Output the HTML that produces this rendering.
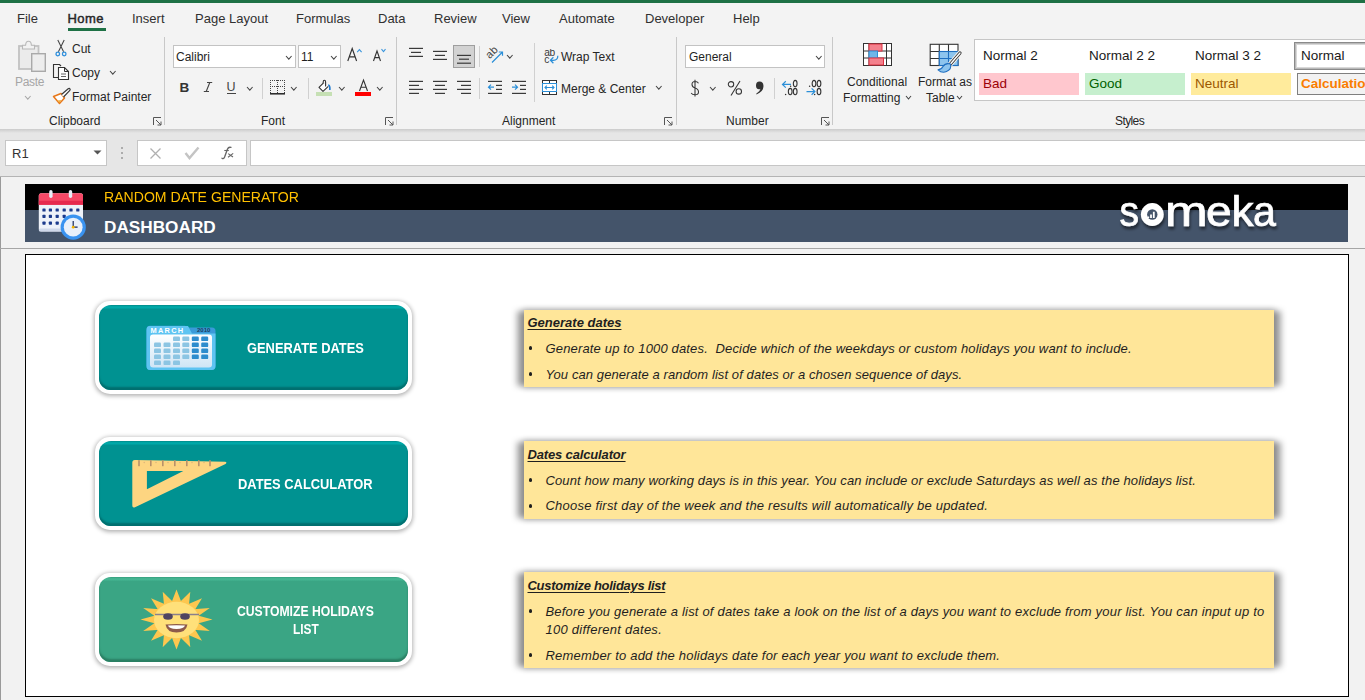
<!DOCTYPE html>
<html><head><meta charset="utf-8">
<style>
*{box-sizing:border-box;margin:0;padding:0}
html,body{width:1365px;height:700px;overflow:hidden;background:#f0f0f0;font-family:"Liberation Sans",sans-serif;color:#262626}
.a{position:absolute}
.t{position:absolute;white-space:nowrap}
</style></head><body>
<div class="a" style="left:0px;top:0px;width:1365px;height:3px;background:#1e7145"></div>
<div class="a" style="left:0px;top:3px;width:1365px;height:126px;background:#f3f3f3"></div>
<div class="t" style="left:17px;top:12.00px;font-size:13px;line-height:13px;color:#303030;font-weight:normal;font-style:normal;font-family:'Liberation Sans',sans-serif;">File</div>
<div class="t" style="left:67.5px;top:12.00px;font-size:13px;line-height:13px;color:#262626;font-weight:normal;font-style:normal;font-family:'Liberation Sans',sans-serif;-webkit-text-stroke:0.45px #262626;letter-spacing:0.4px">Home</div>
<div class="t" style="left:132px;top:12.00px;font-size:13px;line-height:13px;color:#303030;font-weight:normal;font-style:normal;font-family:'Liberation Sans',sans-serif;">Insert</div>
<div class="t" style="left:195px;top:12.00px;font-size:13px;line-height:13px;color:#303030;font-weight:normal;font-style:normal;font-family:'Liberation Sans',sans-serif;">Page Layout</div>
<div class="t" style="left:296px;top:12.00px;font-size:13px;line-height:13px;color:#303030;font-weight:normal;font-style:normal;font-family:'Liberation Sans',sans-serif;">Formulas</div>
<div class="t" style="left:378px;top:12.00px;font-size:13px;line-height:13px;color:#303030;font-weight:normal;font-style:normal;font-family:'Liberation Sans',sans-serif;">Data</div>
<div class="t" style="left:434px;top:12.00px;font-size:13px;line-height:13px;color:#303030;font-weight:normal;font-style:normal;font-family:'Liberation Sans',sans-serif;">Review</div>
<div class="t" style="left:502px;top:12.00px;font-size:13px;line-height:13px;color:#303030;font-weight:normal;font-style:normal;font-family:'Liberation Sans',sans-serif;">View</div>
<div class="t" style="left:559px;top:12.00px;font-size:13px;line-height:13px;color:#303030;font-weight:normal;font-style:normal;font-family:'Liberation Sans',sans-serif;">Automate</div>
<div class="t" style="left:645px;top:12.00px;font-size:13px;line-height:13px;color:#303030;font-weight:normal;font-style:normal;font-family:'Liberation Sans',sans-serif;">Developer</div>
<div class="t" style="left:733px;top:12.00px;font-size:13px;line-height:13px;color:#303030;font-weight:normal;font-style:normal;font-family:'Liberation Sans',sans-serif;">Help</div>
<div class="a" style="left:68px;top:28px;width:38px;height:3px;background:#1e7145"></div>
<div class="a" style="left:164px;top:37px;width:1px;height:88px;background:#c8c8c8"></div>
<div class="a" style="left:396px;top:37px;width:1px;height:88px;background:#c8c8c8"></div>
<div class="a" style="left:676px;top:37px;width:1px;height:88px;background:#c8c8c8"></div>
<div class="a" style="left:832px;top:37px;width:1px;height:88px;background:#c8c8c8"></div>
<svg class="a" style="left:16px;top:39px;" width="32" height="34" viewBox="0 0 32 34">
<rect x="3" y="7" width="19.5" height="23" fill="#ebebeb" stroke="#c2c2c2" stroke-width="1.8"/>
<path d="M6.5 10 V6.2 H9.6 Q9.8 2.3 12.5 2.3 Q15.2 2.3 15.4 6.2 H18.5 V10 Z" fill="#f2f2f2" stroke="#b8b8b8" stroke-width="1.1"/>
<rect x="15.7" y="14.7" width="13.6" height="17.6" fill="#ededed" stroke="#a9a9a9" stroke-width="1.4"/>
</svg>
<div class="t" style="left:15px;top:75.84px;font-size:12px;line-height:12px;color:#a6a6a6;font-weight:normal;font-style:normal;font-family:'Liberation Sans',sans-serif;letter-spacing:-0.3px">Paste</div>
<svg class="a" style="left:24px;top:95px;" width="7.6" height="5.1" viewBox="0 0 7.6 5.1"><path d="M1 1 L3.8 4.1 L6.6 1" fill="none" stroke="#a6a6a6" stroke-width="1.05"/></svg>
<svg class="a" style="left:54px;top:39px;" width="14" height="18" viewBox="0 0 14 18">
<path d="M3.8 1 L9.6 12.8 M10.2 1 L4.4 12.8" stroke="#444" stroke-width="1.05" fill="none"/>
<circle cx="3.8" cy="15" r="1.8" fill="none" stroke="#2f8fdc" stroke-width="1.3"/>
<circle cx="10.2" cy="15" r="1.8" fill="none" stroke="#2f8fdc" stroke-width="1.3"/>
</svg>
<div class="t" style="left:72px;top:42.84px;font-size:12px;line-height:12px;color:#262626;font-weight:normal;font-style:normal;font-family:'Liberation Sans',sans-serif;">Cut</div>
<svg class="a" style="left:52px;top:63px;" width="18" height="18" viewBox="0 0 18 18">
<path d="M8.5 14.5 H1.5 V1.5 H7.5 L9 3" fill="none" stroke="#333" stroke-width="1.1"/>
<path d="M6.5 4.5 H12.5 L16.5 8.5 V16.5 H6.5 Z" fill="#fff" stroke="#333" stroke-width="1.1"/>
<path d="M12.5 4.5 V8.5 H16.5" fill="none" stroke="#333" stroke-width="1"/>
<path d="M9 11 H14 M9 13.5 H14" stroke="#555" stroke-width="0.9"/>
</svg>
<div class="t" style="left:72px;top:67.34px;font-size:12px;line-height:12px;color:#262626;font-weight:normal;font-style:normal;font-family:'Liberation Sans',sans-serif;">Copy</div>
<svg class="a" style="left:109px;top:70px;" width="7.6" height="5.1" viewBox="0 0 7.6 5.1"><path d="M1 1 L3.8 4.1 L6.6 1" fill="none" stroke="#444" stroke-width="1.05"/></svg>
<svg class="a" style="left:52px;top:87px;" width="19" height="18" viewBox="0 0 19 18">
<path d="M1.5 9.5 L9 6.5 L12.5 11 L7.5 16.5 Z" fill="#fff" stroke="#e8771a" stroke-width="1.5" stroke-linejoin="round"/>
<path d="M5 13.5 L9.5 13 L7.5 15.8 Z" fill="#f0b040"/>
<path d="M9.5 7.5 L16.2 1.8 Q17.3 1 18 2 Q18.5 2.8 17.6 3.7 L11.5 10" fill="#fff" stroke="#3a3a3a" stroke-width="1.2" stroke-linejoin="round"/>
</svg>
<div class="t" style="left:72px;top:90.84px;font-size:12px;line-height:12px;color:#262626;font-weight:normal;font-style:normal;font-family:'Liberation Sans',sans-serif;">Format Painter</div>
<div class="t" style="left:49px;top:114.84px;font-size:12px;line-height:12px;color:#262626;font-weight:normal;font-style:normal;font-family:'Liberation Sans',sans-serif;">Clipboard</div>
<svg class="a" style="left:153px;top:117px;" width="9" height="9" viewBox="0 0 9 9"><path d="M0.5 8 V0.5 H8" fill="none" stroke="#555" stroke-width="1"/><path d="M3 3 L8 8 M8 4.5 V8 H4.5" fill="none" stroke="#555" stroke-width="1"/></svg>
<div class="a" style="left:173px;top:45px;width:123px;height:23px;background:#fff;border:1px solid #c3c3c3"></div>
<div class="t" style="left:176px;top:50.84px;font-size:12px;line-height:12px;color:#1f1f1f;font-weight:normal;font-style:normal;font-family:'Liberation Sans',sans-serif;">Calibri</div>
<svg class="a" style="left:285px;top:55px;" width="7.6" height="5.1" viewBox="0 0 7.6 5.1"><path d="M1 1 L3.8 4.1 L6.6 1" fill="none" stroke="#444" stroke-width="1.05"/></svg>
<div class="a" style="left:298px;top:45px;width:43px;height:23px;background:#fff;border:1px solid #c3c3c3"></div>
<div class="t" style="left:301px;top:50.84px;font-size:12px;line-height:12px;color:#1f1f1f;font-weight:normal;font-style:normal;font-family:'Liberation Sans',sans-serif;">11</div>
<svg class="a" style="left:330px;top:55px;" width="7.6" height="5.1" viewBox="0 0 7.6 5.1"><path d="M1 1 L3.8 4.1 L6.6 1" fill="none" stroke="#444" stroke-width="1.05"/></svg>
<svg class="a" style="left:345px;top:46px;" width="20" height="17" viewBox="0 0 20 17"><path d="M2.8 15 L7.2 2.5 L11.6 15 M4.3 10.8 H10.1" fill="none" stroke="#333" stroke-width="1.15"/><path d="M12.2 6.2 L14.4 3.6 L16.6 6.2" fill="none" stroke="#3a96dd" stroke-width="1.1"/></svg>
<svg class="a" style="left:371px;top:46px;" width="20" height="17" viewBox="0 0 20 17"><path d="M2.5 15 L6 5 L9.5 15 M3.7 11.6 H8.3" fill="none" stroke="#333" stroke-width="1.1"/><path d="M10.5 3.2 L12.5 5.6 L14.5 3.2" fill="none" stroke="#3a96dd" stroke-width="1.1"/></svg>
<div class="t" style="left:179.5px;top:80.57px;font-size:13.5px;line-height:13.5px;color:#333;font-weight:bold;font-style:normal;font-family:'Liberation Sans',sans-serif;">B</div>
<svg class="a" style="left:202px;top:81px;" width="12" height="12" viewBox="0 0 12 12"><path d="M7.8 1.5 L4.2 10.5 M5 1.5 H10.2 M1.8 10.5 H7" fill="none" stroke="#444" stroke-width="1.1"/></svg>
<div class="t" style="left:226.5px;top:81.42px;font-size:12.5px;line-height:12.5px;color:#444;font-weight:normal;font-style:normal;font-family:'Liberation Sans',sans-serif;">U</div>
<div class="a" style="left:227px;top:93px;width:9px;height:1px;background:#444"></div>
<svg class="a" style="left:245.5px;top:85.5px;" width="7.6" height="5.1" viewBox="0 0 7.6 5.1"><path d="M1 1 L3.8 4.1 L6.6 1" fill="none" stroke="#444" stroke-width="1.05"/></svg>
<div class="a" style="left:262px;top:78px;width:1px;height:21px;background:#d0d0d0"></div>
<svg class="a" style="left:269px;top:79px;" width="17" height="17" viewBox="0 0 17 17">
<rect x="1" y="1" width="1" height="1" fill="#444"/><rect x="1" y="7" width="1" height="1" fill="#444"/><rect x="3" y="1" width="1" height="1" fill="#444"/><rect x="3" y="7" width="1" height="1" fill="#444"/><rect x="5" y="1" width="1" height="1" fill="#444"/><rect x="5" y="7" width="1" height="1" fill="#444"/><rect x="7" y="1" width="1" height="1" fill="#444"/><rect x="7" y="7" width="1" height="1" fill="#444"/><rect x="9" y="1" width="1" height="1" fill="#444"/><rect x="9" y="7" width="1" height="1" fill="#444"/><rect x="11" y="1" width="1" height="1" fill="#444"/><rect x="11" y="7" width="1" height="1" fill="#444"/><rect x="13" y="1" width="1" height="1" fill="#444"/><rect x="13" y="7" width="1" height="1" fill="#444"/><rect x="15" y="1" width="1" height="1" fill="#444"/><rect x="15" y="7" width="1" height="1" fill="#444"/><rect x="1" y="1" width="1" height="1" fill="#444"/><rect x="15" y="1" width="1" height="1" fill="#444"/><rect x="8" y="1" width="1" height="1" fill="#444"/><rect x="1" y="3" width="1" height="1" fill="#444"/><rect x="15" y="3" width="1" height="1" fill="#444"/><rect x="8" y="3" width="1" height="1" fill="#444"/><rect x="1" y="5" width="1" height="1" fill="#444"/><rect x="15" y="5" width="1" height="1" fill="#444"/><rect x="8" y="5" width="1" height="1" fill="#444"/><rect x="1" y="7" width="1" height="1" fill="#444"/><rect x="15" y="7" width="1" height="1" fill="#444"/><rect x="8" y="7" width="1" height="1" fill="#444"/><rect x="1" y="9" width="1" height="1" fill="#444"/><rect x="15" y="9" width="1" height="1" fill="#444"/><rect x="8" y="9" width="1" height="1" fill="#444"/><rect x="1" y="11" width="1" height="1" fill="#444"/><rect x="15" y="11" width="1" height="1" fill="#444"/><rect x="8" y="11" width="1" height="1" fill="#444"/><rect x="1" y="13" width="1" height="1" fill="#444"/><rect x="15" y="13" width="1" height="1" fill="#444"/><rect x="8" y="13" width="1" height="1" fill="#444"/>
<path d="M1 14.8 H16" stroke="#222" stroke-width="1.5"/>
</svg>
<svg class="a" style="left:290px;top:86px;" width="7.6" height="5.1" viewBox="0 0 7.6 5.1"><path d="M1 1 L3.8 4.1 L6.6 1" fill="none" stroke="#444" stroke-width="1.05"/></svg>
<div class="a" style="left:308px;top:78px;width:1px;height:21px;background:#d0d0d0"></div>
<svg class="a" style="left:316px;top:79px;" width="18" height="18" viewBox="0 0 18 18">
<path d="M7.3 4.2 L3 8.3 L7 12.3 L12.3 7.3" fill="#fff" stroke="#333" stroke-width="1.1" stroke-linejoin="round"/>
<path d="M9.6 7.5 V3 Q9.6 1.3 8.4 1.3 Q7.2 1.3 7.2 3 V4.5" fill="none" stroke="#333" stroke-width="1.1"/>
<path d="M12.2 6 Q14.2 6.3 13.8 11" fill="none" stroke="#1f7ad0" stroke-width="1.7"/>
<rect x="0" y="13" width="16" height="4" fill="#c6e0b4"/>
</svg>
<svg class="a" style="left:337.5px;top:86px;" width="7.6" height="5.1" viewBox="0 0 7.6 5.1"><path d="M1 1 L3.8 4.1 L6.6 1" fill="none" stroke="#444" stroke-width="1.05"/></svg>
<svg class="a" style="left:357px;top:78px;" width="14" height="14" viewBox="0 0 14 14"><path d="M2.5 13 L6.5 2 L10.5 13 M3.8 9.3 H9.2" fill="none" stroke="#333" stroke-width="1.1"/></svg>
<div class="a" style="left:355px;top:92px;width:16px;height:4px;background:#ff0000"></div>
<svg class="a" style="left:376px;top:86px;" width="7.6" height="5.1" viewBox="0 0 7.6 5.1"><path d="M1 1 L3.8 4.1 L6.6 1" fill="none" stroke="#444" stroke-width="1.05"/></svg>
<div class="t" style="left:261px;top:114.84px;font-size:12px;line-height:12px;color:#262626;font-weight:normal;font-style:normal;font-family:'Liberation Sans',sans-serif;">Font</div>
<svg class="a" style="left:385px;top:117px;" width="9" height="9" viewBox="0 0 9 9"><path d="M0.5 8 V0.5 H8" fill="none" stroke="#555" stroke-width="1"/><path d="M3 3 L8 8 M8 4.5 V8 H4.5" fill="none" stroke="#555" stroke-width="1"/></svg>
<!--RIBBON2-->
<svg class="a" style="left:408px;top:44px;" width="17" height="16" viewBox="0 0 17 16"><rect x="1" y="3.8" width="14" height="1.2" fill="#3a3a3a"/><rect x="3" y="7.8" width="10" height="1.2" fill="#3a3a3a"/><rect x="1" y="11.8" width="14" height="1.2" fill="#3a3a3a"/></svg>
<svg class="a" style="left:432px;top:47px;" width="17" height="16" viewBox="0 0 17 16"><rect x="1" y="3.8" width="14" height="1.2" fill="#3a3a3a"/><rect x="3" y="7.8" width="10" height="1.2" fill="#3a3a3a"/><rect x="1" y="11.8" width="14" height="1.2" fill="#3a3a3a"/></svg>
<div class="a" style="left:453px;top:45px;width:22px;height:23px;background:#d2d2d2;border:1px solid #9e9e9e"></div>
<svg class="a" style="left:456px;top:51px;" width="17" height="16" viewBox="0 0 17 16"><rect x="1" y="3.8" width="14" height="1.2" fill="#3a3a3a"/><rect x="3" y="7.6" width="10" height="1.2" fill="#3a3a3a"/><rect x="1" y="11.6" width="14" height="1.2" fill="#3a3a3a"/></svg>
<div class="a" style="left:479px;top:46px;width:1px;height:21px;background:#d0d0d0"></div>
<svg class="a" style="left:486px;top:46px;" width="20" height="20" viewBox="0 0 20 20">
<text x="0" y="0" transform="translate(3.8,13.2) rotate(-45)" font-family="Liberation Sans" font-size="11" fill="#444">ab</text>
<path d="M6 16.5 L16.5 6 M12.8 6 H16.5 V9.8" fill="none" stroke="#2b8fd8" stroke-width="1.2"/>
</svg>
<svg class="a" style="left:506px;top:54px;" width="7.6" height="5.1" viewBox="0 0 7.6 5.1"><path d="M1 1 L3.8 4.1 L6.6 1" fill="none" stroke="#444" stroke-width="1.05"/></svg>
<svg class="a" style="left:408px;top:77px;" width="17" height="20" viewBox="0 0 17 20"><rect x="1" y="3.8" width="14" height="1.2" fill="#3a3a3a"/><rect x="1" y="7.8" width="10" height="1.2" fill="#3a3a3a"/><rect x="1" y="11.8" width="14" height="1.2" fill="#3a3a3a"/><rect x="1" y="15.8" width="10" height="1.2" fill="#3a3a3a"/></svg>
<svg class="a" style="left:432px;top:77px;" width="17" height="20" viewBox="0 0 17 20"><rect x="1" y="3.8" width="14" height="1.2" fill="#3a3a3a"/><rect x="3" y="7.8" width="10" height="1.2" fill="#3a3a3a"/><rect x="1" y="11.8" width="14" height="1.2" fill="#3a3a3a"/><rect x="3" y="15.8" width="10" height="1.2" fill="#3a3a3a"/></svg>
<svg class="a" style="left:456px;top:77px;" width="17" height="20" viewBox="0 0 17 20"><rect x="1" y="3.8" width="14" height="1.2" fill="#3a3a3a"/><rect x="5" y="7.8" width="10" height="1.2" fill="#3a3a3a"/><rect x="1" y="11.8" width="14" height="1.2" fill="#3a3a3a"/><rect x="5" y="15.8" width="10" height="1.2" fill="#3a3a3a"/></svg>
<div class="a" style="left:479px;top:78px;width:1px;height:21px;background:#d0d0d0"></div>
<svg class="a" style="left:487px;top:77px;" width="17" height="20" viewBox="0 0 17 20"><rect x="1" y="3.8" width="14" height="1.2" fill="#3a3a3a"/><rect x="9" y="7.8" width="6" height="1.2" fill="#3a3a3a"/><rect x="9" y="11.8" width="6" height="1.2" fill="#3a3a3a"/><rect x="1" y="15.8" width="14" height="1.2" fill="#3a3a3a"/><path d="M7 10.2 H1.5 M4 7.7 L1.5 10.2 L4 12.7" fill="none" stroke="#2b8fd8" stroke-width="1.2"/></svg>
<svg class="a" style="left:511px;top:77px;" width="17" height="20" viewBox="0 0 17 20"><rect x="1" y="3.8" width="14" height="1.2" fill="#3a3a3a"/><rect x="9" y="7.8" width="6" height="1.2" fill="#3a3a3a"/><rect x="9" y="11.8" width="6" height="1.2" fill="#3a3a3a"/><rect x="1" y="15.8" width="14" height="1.2" fill="#3a3a3a"/><path d="M1 10.2 H6.5 M4 7.7 L6.5 10.2 L4 12.7" fill="none" stroke="#2b8fd8" stroke-width="1.2"/></svg>
<div class="a" style="left:534px;top:43px;width:1px;height:59px;background:#d0d0d0"></div>
<svg class="a" style="left:543px;top:49px;" width="17" height="17" viewBox="0 0 17 17">
<text x="1.2" y="6.5" font-family="Liberation Sans" font-size="10.2" fill="#3a3a3a" letter-spacing="-0.3">ab</text>
<text x="1.2" y="14" font-family="Liberation Sans" font-size="10.2" fill="#3a3a3a">c</text>
<path d="M14.8 6.8 Q15 11.3 10.2 11.3 H7.6 M10.4 8.3 L7.4 11.3 L10.4 14.3" fill="none" stroke="#2b8fd8" stroke-width="1.25"/>
</svg>
<div class="t" style="left:561px;top:50.84px;font-size:12px;line-height:12px;color:#262626;font-weight:normal;font-style:normal;font-family:'Liberation Sans',sans-serif;">Wrap Text</div>
<svg class="a" style="left:541px;top:79px;" width="17" height="17" viewBox="0 0 17 17">
<rect x="1.5" y="1.5" width="14" height="14" fill="#fff" stroke="#333" stroke-width="1"/>
<path d="M8.5 1.5 V4.5 M8.5 12.5 V15.5" stroke="#333"/>
<rect x="1.5" y="4.5" width="14" height="8" fill="#fff" stroke="#2b8fd8" stroke-width="1"/>
<path d="M4 8.5 H13 M5.8 6.7 L4 8.5 L5.8 10.3 M11.2 6.7 L13 8.5 L11.2 10.3" fill="none" stroke="#2b8fd8" stroke-width="1.1"/>
</svg>
<div class="t" style="left:561px;top:82.84px;font-size:12px;line-height:12px;color:#262626;font-weight:normal;font-style:normal;font-family:'Liberation Sans',sans-serif;">Merge &amp; Center</div>
<svg class="a" style="left:655px;top:85px;" width="7.6" height="5.1" viewBox="0 0 7.6 5.1"><path d="M1 1 L3.8 4.1 L6.6 1" fill="none" stroke="#444" stroke-width="1.05"/></svg>
<div class="t" style="left:502px;top:114.84px;font-size:12px;line-height:12px;color:#262626;font-weight:normal;font-style:normal;font-family:'Liberation Sans',sans-serif;">Alignment</div>
<svg class="a" style="left:664px;top:117px;" width="9" height="9" viewBox="0 0 9 9"><path d="M0.5 8 V0.5 H8" fill="none" stroke="#555" stroke-width="1"/><path d="M3 3 L8 8 M8 4.5 V8 H4.5" fill="none" stroke="#555" stroke-width="1"/></svg>
<div class="a" style="left:685px;top:45px;width:140px;height:23px;background:#fff;border:1px solid #c3c3c3"></div>
<div class="t" style="left:689px;top:50.84px;font-size:12px;line-height:12px;color:#1f1f1f;font-weight:normal;font-style:normal;font-family:'Liberation Sans',sans-serif;">General</div>
<svg class="a" style="left:815px;top:55px;" width="7.6" height="5.1" viewBox="0 0 7.6 5.1"><path d="M1 1 L3.8 4.1 L6.6 1" fill="none" stroke="#444" stroke-width="1.05"/></svg>
<svg class="a" style="left:688px;top:78px;" width="14" height="20" viewBox="0 0 14 20"><path d="M10.5 5.2 Q9.5 3.5 7 3.5 Q4 3.5 4 6.5 Q4 9 7 10 Q10.5 11 10.5 14 Q10.5 16.8 7 16.8 Q4.2 16.8 3.2 15 M7 1.8 V18.5" fill="none" stroke="#333" stroke-width="1.05"/></svg>
<svg class="a" style="left:709px;top:86px;" width="7.6" height="5.1" viewBox="0 0 7.6 5.1"><path d="M1 1 L3.8 4.1 L6.6 1" fill="none" stroke="#444" stroke-width="1.05"/></svg>
<svg class="a" style="left:726px;top:79px;" width="18" height="18" viewBox="0 0 18 18"><circle cx="5" cy="5.3" r="2.7" fill="none" stroke="#333" stroke-width="1.05"/><circle cx="12.8" cy="12.4" r="2.7" fill="none" stroke="#333" stroke-width="1.05"/><path d="M14 2 L5 16.5" stroke="#333" stroke-width="1.05"/></svg>
<svg class="a" style="left:753px;top:79px;" width="12" height="18" viewBox="0 0 12 18"><path d="M6.5 2.5 Q10.5 2.5 10.5 7 Q10.5 12.5 3.5 15.5 L3.2 14.8 Q7.2 12.3 7.5 9.8 Q6.8 10.3 6 10.3 Q3 10.3 3 6.5 Q3 2.5 6.5 2.5 Z" fill="#333"/></svg>
<div class="a" style="left:774px;top:78px;width:1px;height:21px;background:#d0d0d0"></div>
<svg class="a" style="left:778px;top:76px;" width="48" height="24" viewBox="0 0 48 24"><ellipse cx="17.2" cy="7.6" rx="1.85" ry="3.2" fill="none" stroke="#333" stroke-width="1.1"/><circle cx="12.6" cy="10.3" r="0.75" fill="#333"/><ellipse cx="12.2" cy="15.6" rx="1.85" ry="3.2" fill="none" stroke="#333" stroke-width="1.1"/><ellipse cx="17.2" cy="15.6" rx="1.85" ry="3.2" fill="none" stroke="#333" stroke-width="1.1"/><circle cx="7.6" cy="18.4" r="0.75" fill="#333"/><path d="M13 8.4 H4.6 M7.8 5.2 L4.5 8.4 L7.8 11.6" fill="none" stroke="#2b8fd8" stroke-width="1.2"/><ellipse cx="36" cy="7.6" rx="1.85" ry="3.2" fill="none" stroke="#333" stroke-width="1.1"/><ellipse cx="41" cy="7.6" rx="1.85" ry="3.2" fill="none" stroke="#333" stroke-width="1.1"/><circle cx="31.6" cy="10.3" r="0.75" fill="#333"/><ellipse cx="41" cy="15.6" rx="1.85" ry="3.2" fill="none" stroke="#333" stroke-width="1.1"/><circle cx="36.6" cy="18.4" r="0.75" fill="#333"/><path d="M28.5 15.6 H36.8 M33.6 12.4 L36.9 15.6 L33.6 18.8" fill="none" stroke="#2b8fd8" stroke-width="1.2"/></svg>
<div class="t" style="left:726px;top:114.84px;font-size:12px;line-height:12px;color:#262626;font-weight:normal;font-style:normal;font-family:'Liberation Sans',sans-serif;">Number</div>
<svg class="a" style="left:821px;top:117px;" width="9" height="9" viewBox="0 0 9 9"><path d="M0.5 8 V0.5 H8" fill="none" stroke="#555" stroke-width="1"/><path d="M3 3 L8 8 M8 4.5 V8 H4.5" fill="none" stroke="#555" stroke-width="1"/></svg>
<svg class="a" style="left:863px;top:43px;" width="30" height="24" viewBox="0 0 30 24">
<rect x="0.5" y="0.5" width="28" height="22" fill="#fff" stroke="#333" stroke-width="1"/>
<path d="M6 0.5 V22.5 M23.5 0.5 V22.5 M0.5 8 H28.5 M0.5 15 H28.5" fill="none" stroke="#333" stroke-width="1"/>
<rect x="6" y="1" width="13" height="7" fill="#f4818d" stroke="#e03040" stroke-width="1"/>
<rect x="6" y="8" width="8.5" height="7" fill="#6fb6e8" stroke="#2b8fd8" stroke-width="1"/>
<rect x="6" y="15" width="14.5" height="7" fill="#f4818d" stroke="#e03040" stroke-width="1"/>
</svg>
<div class="t" style="left:847px;top:75.84px;font-size:12px;line-height:12px;color:#262626;font-weight:normal;font-style:normal;font-family:'Liberation Sans',sans-serif;">Conditional</div>
<div class="t" style="left:843px;top:91.84px;font-size:12px;line-height:12px;color:#262626;font-weight:normal;font-style:normal;font-family:'Liberation Sans',sans-serif;">Formatting</div>
<svg class="a" style="left:905px;top:95px;" width="7" height="5" viewBox="0 0 7 5"><path d="M1 1 L3.5 4 L6 1" fill="none" stroke="#444" stroke-width="1.05"/></svg>
<svg class="a" style="left:929px;top:43px;" width="34" height="32" viewBox="0 0 34 32">
<rect x="1.2" y="1.3" width="27.8" height="21.2" fill="#fff" stroke="#333" stroke-width="1.1"/>
<path d="M10.3 1.3 V22.5 M19.5 1.3 V8.5 M1.2 8.5 H10.3 M1.2 15.5 H10.3" fill="none" stroke="#333" stroke-width="1.1"/>
<rect x="10.3" y="8.5" width="18.7" height="14" fill="#8ec5ee" stroke="#1f6fc0" stroke-width="1.1"/>
<path d="M19.5 8.5 V22.5 M10.3 15.5 H29" fill="none" stroke="#1f6fc0" stroke-width="1.1"/>
<path d="M31 10 L21 21.5" stroke="#f3f3f3" stroke-width="5" stroke-linecap="round"/>
<path d="M31 10 L21 21.5" stroke="#333" stroke-width="3.2" stroke-linecap="round"/>
<path d="M31 10 L21 21.5" stroke="#fff" stroke-width="1.4" stroke-linecap="round"/>
<path d="M21.5 21 Q16.5 19.5 14 23.5 Q12.5 26.5 9 26.8 Q13 30.5 17.5 28.5 Q23 26 21.5 21 Z" fill="#8ec5ee" stroke="#1f6fc0" stroke-width="1.1" stroke-linejoin="round"/>
</svg>
<div class="t" style="left:918px;top:75.84px;font-size:12px;line-height:12px;color:#262626;font-weight:normal;font-style:normal;font-family:'Liberation Sans',sans-serif;">Format as</div>
<div class="t" style="left:926px;top:91.84px;font-size:12px;line-height:12px;color:#262626;font-weight:normal;font-style:normal;font-family:'Liberation Sans',sans-serif;">Table</div>
<svg class="a" style="left:956px;top:95px;" width="7" height="5" viewBox="0 0 7 5"><path d="M1 1 L3.5 4 L6 1" fill="none" stroke="#444" stroke-width="1.05"/></svg>
<div class="a" style="left:974px;top:39px;width:400px;height:62px;background:#fff;border:1px solid #c6c6c6"></div>
<div class="t" style="left:983px;top:49.07px;font-size:13.5px;line-height:13.5px;color:#1a1a1a;font-weight:normal;font-style:normal;font-family:'Liberation Sans',sans-serif;">Normal 2</div>
<div class="t" style="left:1089px;top:49.07px;font-size:13.5px;line-height:13.5px;color:#1a1a1a;font-weight:normal;font-style:normal;font-family:'Liberation Sans',sans-serif;">Normal 2 2</div>
<div class="t" style="left:1195px;top:49.07px;font-size:13.5px;line-height:13.5px;color:#1a1a1a;font-weight:normal;font-style:normal;font-family:'Liberation Sans',sans-serif;">Normal 3 2</div>
<div class="a" style="left:979px;top:73px;width:100px;height:22px;background:#ffc7ce"></div>
<div class="t" style="left:983px;top:77.07px;font-size:13.5px;line-height:13.5px;color:#9c0006;font-weight:normal;font-style:normal;font-family:'Liberation Sans',sans-serif;">Bad</div>
<div class="a" style="left:1085px;top:73px;width:100px;height:22px;background:#c6efce"></div>
<div class="t" style="left:1089px;top:77.07px;font-size:13.5px;line-height:13.5px;color:#006100;font-weight:normal;font-style:normal;font-family:'Liberation Sans',sans-serif;">Good</div>
<div class="a" style="left:1191px;top:73px;width:100px;height:22px;background:#ffeb9c"></div>
<div class="t" style="left:1195px;top:77.07px;font-size:13.5px;line-height:13.5px;color:#9c5700;font-weight:normal;font-style:normal;font-family:'Liberation Sans',sans-serif;">Neutral</div>
<div class="a" style="left:1294px;top:42px;width:80px;height:28px;background:#fff;border:2px solid #b9b9b9;box-shadow:inset 0 0 0 1px #d8d8d8"></div>
<div class="a" style="left:1294px;top:42px;width:80px;height:28px;border:1px solid #8a8a8a"></div>
<div class="t" style="left:1301px;top:49.07px;font-size:13.5px;line-height:13.5px;color:#1a1a1a;font-weight:normal;font-style:normal;font-family:'Liberation Sans',sans-serif;">Normal</div>
<div class="a" style="left:1297px;top:73px;width:80px;height:22px;background:#f2f2f2;border:1px solid #7f7f7f"></div>
<div class="t" style="left:1301px;top:77.07px;font-size:13.5px;line-height:13.5px;color:#fa7d00;font-weight:bold;font-style:normal;font-family:'Liberation Sans',sans-serif;">Calculation</div>
<div class="t" style="left:1115px;top:114.84px;font-size:12px;line-height:12px;color:#262626;font-weight:normal;font-style:normal;font-family:'Liberation Sans',sans-serif;letter-spacing:-0.6px">Styles</div>
<!--FBAR-->
<div class="a" style="left:0px;top:129px;width:1365px;height:47px;background:#e6e6e6"></div>
<div class="a" style="left:0px;top:129px;width:1365px;height:4px;background:linear-gradient(#cbcbcb,#e6e6e6)"></div>
<div class="a" style="left:5px;top:140px;width:102px;height:26px;background:#fff;border:1px solid #c6c6c6"></div>
<div class="t" style="left:12px;top:147.00px;font-size:13px;line-height:13px;color:#333;font-weight:normal;font-style:normal;font-family:'Liberation Sans',sans-serif;">R1</div>
<svg class="a" style="left:93px;top:150px;" width="9" height="6" viewBox="0 0 9 6"><path d="M0.5 0.5 H8.5 L4.5 4.5 Z" fill="#555"/></svg>
<svg class="a" style="left:120px;top:146px;" width="4" height="14" viewBox="0 0 4 14"><circle cx="2" cy="2" r="1" fill="#999"/><circle cx="2" cy="7" r="1" fill="#999"/><circle cx="2" cy="12" r="1" fill="#999"/></svg>
<div class="a" style="left:137px;top:140px;width:110px;height:26px;background:#fff;border:1px solid #c6c6c6"></div>
<svg class="a" style="left:149px;top:147px;" width="13" height="13" viewBox="0 0 13 13"><path d="M1.5 1.5 L11.5 11.5 M11.5 1.5 L1.5 11.5" stroke="#b0b0b0" stroke-width="1.3"/></svg>
<svg class="a" style="left:184px;top:146px;" width="16" height="14" viewBox="0 0 16 14"><path d="M1.5 7 L5.5 12 L14.5 1.5" fill="none" stroke="#c4c4c4" stroke-width="2.4"/></svg>
<svg class="a" style="left:214px;top:142px;" width="28" height="22" viewBox="0 0 28 22"><path d="M8 16.2 Q9.6 17.4 10.6 15 L13.4 7.2 Q14.5 4.6 17 5.4" fill="none" stroke="#666" stroke-width="1.35" stroke-linecap="round"/><path d="M10.3 8.5 H14.8" stroke="#666" stroke-width="1.1"/><path d="M14.2 11.6 L19 15 M19.2 11.4 L14 15.2" stroke="#666" stroke-width="1.15"/></svg>
<div class="a" style="left:250px;top:140px;width:1120px;height:26px;background:#fff;border:1px solid #c6c6c6"></div>
<div class="a" style="left:0px;top:176px;width:1365px;height:1px;background:#b4b4b4"></div>
<div class="a" style="left:0px;top:177px;width:1365px;height:523px;background:#f2f2f2"></div>
<div class="a" style="left:0px;top:177px;width:1px;height:523px;background:#9a9a9a"></div>
<div class="a" style="left:25px;top:184px;width:1323px;height:26px;background:#000"></div>
<div class="a" style="left:25px;top:210px;width:1323px;height:32px;background:#44546a"></div>
<div class="a" style="left:0px;top:248px;width:1365px;height:1px;background:#a6a6a6"></div>
<svg class="a" style="left:36px;top:188px;" width="52" height="54" viewBox="0 0 52 54">
<rect x="2.8" y="5.2" width="44.2" height="38.4" rx="2.5" fill="#eef2f9"/>
<rect x="2.8" y="40.5" width="44.2" height="3.1" rx="1.5" fill="#cfd8ea"/>
<path d="M2.8 16.8 V7.7 Q2.8 5.2 5.3 5.2 H44.5 Q47 5.2 47 7.7 V16.8 Z" fill="#f64866"/>
<rect x="2.8" y="12.8" width="44.2" height="4" fill="#e62a4e"/>
<rect x="13.2" y="2" width="3.4" height="8" rx="1.7" fill="#e8eef8"/>
<rect x="32.8" y="2" width="3.4" height="8" rx="1.7" fill="#e8eef8"/>
<rect x="6.4" y="20.4" width="3.2" height="3.2" rx="0.7" fill="#1b3a8c"/><rect x="12.8" y="20.4" width="3.2" height="3.2" rx="0.7" fill="#1b3a8c"/><rect x="19.6" y="20.4" width="3.2" height="3.2" rx="0.7" fill="#1b3a8c"/><rect x="26.6" y="20.4" width="3.2" height="3.2" rx="0.7" fill="#1b3a8c"/><rect x="33.4" y="20.4" width="3.2" height="3.2" rx="0.7" fill="#1b3a8c"/><rect x="40.2" y="20.4" width="3.2" height="3.2" rx="0.7" fill="#1b3a8c"/><rect x="6.4" y="26.8" width="3.2" height="3.2" rx="0.7" fill="#1b3a8c"/><rect x="12.8" y="26.8" width="3.2" height="3.2" rx="0.7" fill="#1b3a8c"/><rect x="19.6" y="26.8" width="3.2" height="3.2" rx="0.7" fill="#1b3a8c"/><rect x="26.6" y="26.8" width="3.2" height="3.2" rx="0.7" fill="#1b3a8c"/><rect x="6.4" y="33.6" width="3.2" height="3.2" rx="0.7" fill="#1b3a8c"/><rect x="12.8" y="33.6" width="3.2" height="3.2" rx="0.7" fill="#1b3a8c"/><rect x="19.6" y="33.6" width="3.2" height="3.2" rx="0.7" fill="#1b3a8c"/>
<circle cx="37.2" cy="39.2" r="12.6" fill="#3a93f0"/>
<circle cx="37.2" cy="39.2" r="9.4" fill="#e9f0fa"/>
<path d="M37.2 33 V39.2 H41.6" fill="none" stroke="#1b2a5a" stroke-width="1.2"/>
<circle cx="37.2" cy="39.2" r="1.4" fill="#f5b400"/>
</svg>
<div class="t" style="left:104px;top:190.44px;font-size:14.6px;line-height:14.6px;color:#ffc000;font-weight:normal;font-style:normal;font-family:'Liberation Sans',sans-serif;transform:scaleX(0.965);transform-origin:0 0">RANDOM DATE GENERATOR</div>
<div class="t" style="left:104px;top:218.84px;font-size:17.2px;line-height:17.2px;color:#ffffff;font-weight:bold;font-style:normal;font-family:'Liberation Sans',sans-serif;">DASHBOARD</div>
<svg class="a" style="left:1110px;top:186px;" width="175" height="50" viewBox="0 0 175 50">
<defs><filter id="lsh" x="-20%" y="-20%" width="140%" height="160%"><feGaussianBlur in="SourceAlpha" stdDeviation="1.6"/><feOffset dx="1" dy="3"/><feComponentTransfer><feFuncA type="linear" slope="0.55"/></feComponentTransfer><feMerge><feMergeNode/><feMergeNode in="SourceGraphic"/></feMerge></filter></defs>
<g filter="url(#lsh)" fill="#fff" font-family="Liberation Sans" font-size="42" stroke="#fff" stroke-width="0.7">
<text x="9.5" y="40.3" transform="translate(9.5 0) scale(0.93 1) translate(-9.5 0)">s</text>
<circle cx="42.3" cy="28.5" r="11.4" stroke="none"/>
<text x="55" y="40.3" transform="translate(55 0) scale(1.22 1) translate(-55 0)">m</text>
<text x="96" y="40.3" transform="translate(96 0) scale(1.1 1) translate(-96 0)">e</text>
<text x="121.5" y="40.3" transform="translate(121.5 0) scale(1.05 1) translate(-121.5 0)">k</text>
<text x="143" y="40.3" transform="translate(143 0) scale(0.98 1) translate(-143 0)">a</text>
</g>
<circle cx="42.3" cy="28.5" r="5.2" fill="#44546a"/>
<path d="M38.3 32 V30.5 M41 32 V28.5 M43.8 32 V25.8" stroke="#fff" stroke-width="1.8"/>
</svg>
<div class="a" style="left:25px;top:254px;width:1324px;height:443px;background:#fff;border:1px solid #000"></div>
<div class="a" style="left:95px;top:301px;width:317px;height:93px;background:#fff;border-radius:15px;box-shadow:0 1px 4px 1px rgba(0,0,0,0.3)"></div>
<div class="a" style="left:99px;top:305px;width:309px;height:85px;background:linear-gradient(#009291 0px, #009291 1px, #00a8a8 1.6px, #00a8a8 2.6px, #009291 4.5px);border-radius:12px;box-shadow:inset 0 -3px 2px #006f6f"></div>
<div class="a" style="left:95px;top:437px;width:317px;height:93px;background:#fff;border-radius:15px;box-shadow:0 1px 4px 1px rgba(0,0,0,0.3)"></div>
<div class="a" style="left:99px;top:441px;width:309px;height:85px;background:linear-gradient(#009291 0px, #009291 1px, #00a8a8 1.6px, #00a8a8 2.6px, #009291 4.5px);border-radius:12px;box-shadow:inset 0 -3px 2px #006f6f"></div>
<div class="a" style="left:95px;top:573px;width:317px;height:93px;background:#fff;border-radius:15px;box-shadow:0 1px 4px 1px rgba(0,0,0,0.3)"></div>
<div class="a" style="left:99px;top:577px;width:309px;height:85px;background:linear-gradient(#3aa584 0px, #3aa584 1px, #45b592 1.6px, #45b592 2.6px, #3aa584 4.5px);border-radius:12px;box-shadow:inset 0 -3px 2px #2a7f63"></div>
<svg class="a" style="left:146px;top:325px;" width="71" height="47" viewBox="0 0 71 47">
<defs><linearGradient id="cpan" x1="0" y1="0" x2="0" y2="1"><stop offset="0" stop-color="#ffffff"/><stop offset="1" stop-color="#cfe5f5"/></linearGradient></defs>
<path d="M42 2.5 H66 Q69.5 2.5 69.5 6 V41 Q69.5 45 65.5 45 H4 Q0.5 45 0.5 41 V4.5 Q0.5 0.8 4 0.8 H39 Z" fill="#3a9ad9"/>
<path d="M0.5 41 V5 Q0.5 1 4 1 H42 L46 8.5 H69.5 V41 Q69.5 45 65.5 45 H4 Q0.5 45 0.5 41 Z" fill="#5ec4f2"/>
<rect x="4" y="9.5" width="62" height="33" rx="3" fill="url(#cpan)"/>
<text x="4.5" y="7.8" font-family="Liberation Sans" font-weight="bold" font-size="7.4" fill="#fff" letter-spacing="1.3">MARCH</text>
<text x="51" y="7.3" font-family="Liberation Sans" font-weight="bold" font-size="6" fill="#1a3d5c">2010</text>
<rect x="27.0" y="11.5" width="7" height="4.6" rx="1.2" fill="#8cc5e3"/><rect x="36.3" y="11.5" width="7" height="4.6" rx="1.2" fill="#8cc5e3"/><rect x="45.8" y="11.5" width="7" height="4.6" rx="1.2" fill="#2d8ccd"/><rect x="55.2" y="11.5" width="7" height="4.6" rx="1.2" fill="#2d8ccd"/><rect x="8.0" y="17.5" width="7" height="4.6" rx="1.2" fill="#8cc5e3"/><rect x="17.5" y="17.5" width="7" height="4.6" rx="1.2" fill="#8cc5e3"/><rect x="27.0" y="17.5" width="7" height="4.6" rx="1.2" fill="#8cc5e3"/><rect x="36.3" y="17.5" width="7" height="4.6" rx="1.2" fill="#8cc5e3"/><rect x="45.8" y="17.5" width="7" height="4.6" rx="1.2" fill="#2d8ccd"/><rect x="55.2" y="17.5" width="7" height="4.6" rx="1.2" fill="#2d8ccd"/><rect x="8.0" y="23.5" width="7" height="4.6" rx="1.2" fill="#8cc5e3"/><rect x="17.5" y="23.5" width="7" height="4.6" rx="1.2" fill="#8cc5e3"/><rect x="27.0" y="23.5" width="7" height="4.6" rx="1.2" fill="#8cc5e3"/><rect x="36.3" y="23.5" width="7" height="4.6" rx="1.2" fill="#8cc5e3"/><rect x="45.8" y="23.5" width="7" height="4.6" rx="1.2" fill="#2d8ccd"/><rect x="55.2" y="23.5" width="7" height="4.6" rx="1.2" fill="#2d8ccd"/><rect x="8.0" y="29.5" width="7" height="4.6" rx="1.2" fill="#8cc5e3"/><rect x="17.5" y="29.5" width="7" height="4.6" rx="1.2" fill="#8cc5e3"/><rect x="27.0" y="29.5" width="7" height="4.6" rx="1.2" fill="#8cc5e3"/><rect x="36.3" y="29.5" width="7" height="4.6" rx="1.2" fill="#8cc5e3"/><rect x="45.8" y="29.5" width="7" height="4.6" rx="1.2" fill="#2d8ccd"/><rect x="55.2" y="29.5" width="7" height="4.6" rx="1.2" fill="#2d8ccd"/><rect x="8.0" y="35.5" width="7" height="4.6" rx="1.2" fill="#8cc5e3"/><rect x="17.5" y="35.5" width="7" height="4.6" rx="1.2" fill="#8cc5e3"/><rect x="27.0" y="35.5" width="7" height="4.6" rx="1.2" fill="#8cc5e3"/></svg>
<div class="t" style="left:247px;top:340.98px;font-size:14.2px;line-height:14.2px;color:#fff;font-weight:bold;font-style:normal;font-family:'Liberation Sans',sans-serif;transform:scaleX(0.908);transform-origin:0 0">GENERATE DATES</div>
<svg class="a" style="left:131px;top:459px;" width="97" height="50" viewBox="0 0 97 50">
<path d="M1.3 3.5 Q1.3 1 3.8 1 L94 2.8 Q96.5 3.3 94.5 5 L4 48.2 Q1.3 49.3 1.3 46.5 Z M15.9 12 V30.3 L52.3 12 Z" fill="#fdd581" fill-rule="evenodd"/>
<rect x="7.2" y="1.2" width="1.6" height="6" fill="#b8916a"/><rect x="19.0" y="1.2" width="1.6" height="6" fill="#b8916a"/><rect x="31.0" y="1.2" width="1.6" height="6" fill="#b8916a"/><rect x="43.0" y="1.2" width="1.6" height="6" fill="#b8916a"/><rect x="55.0" y="1.2" width="1.6" height="6" fill="#b8916a"/><rect x="67.0" y="1.2" width="1.6" height="6" fill="#b8916a"/><rect x="78.2" y="1.2" width="1.6" height="6" fill="#b8916a"/><circle cx="13.2" cy="3.5" r="0.7" fill="#d9b27a"/><circle cx="25.0" cy="3.5" r="0.7" fill="#d9b27a"/><circle cx="37.0" cy="3.5" r="0.7" fill="#d9b27a"/><circle cx="49.0" cy="3.5" r="0.7" fill="#d9b27a"/><circle cx="61.0" cy="3.5" r="0.7" fill="#d9b27a"/><circle cx="73.0" cy="3.5" r="0.7" fill="#d9b27a"/></svg>
<div class="t" style="left:238px;top:476.98px;font-size:14.2px;line-height:14.2px;color:#fff;font-weight:bold;font-style:normal;font-family:'Liberation Sans',sans-serif;transform:scaleX(0.908);transform-origin:0 0">DATES CALCULATOR</div>
<svg class="a" style="left:135px;top:585px;" width="85" height="70" viewBox="0 0 85 70">
<path d="M36.5 17.5 L41.5 4.5 L46.5 17.5 Z M44.7 17.2 L55.3 6.8 L53.9 20.4 Z M52.4 19.5 L67.0 13.3 L59.5 25.4 Z M58.4 24.2 L74.8 23.0 L62.3 31.8 Z M61.9 30.3 L77.5 34.5 L61.9 38.7 Z M62.3 37.2 L74.8 46.0 L58.4 44.8 Z M59.5 43.6 L67.0 55.7 L52.4 49.5 Z M53.9 48.6 L55.3 62.2 L44.7 51.8 Z M46.5 51.5 L41.5 64.5 L36.5 51.5 Z M38.3 51.8 L27.7 62.2 L29.1 48.6 Z M30.6 49.5 L16.0 55.7 L23.5 43.6 Z M24.6 44.8 L8.2 46.0 L20.7 37.2 Z M21.1 38.7 L5.5 34.5 L21.1 30.3 Z M20.7 31.8 L8.2 23.0 L24.6 24.2 Z M23.5 25.4 L16.0 13.3 L30.6 19.5 Z M29.1 20.4 L27.7 6.8 L38.3 17.2 Z" fill="#fdc74f"/>
<ellipse cx="41.5" cy="35" rx="22.5" ry="18.2" fill="#ffe07a"/>
<path d="M20 29.5 H64" stroke="#8a7f8c" stroke-width="1.3"/>
<ellipse cx="33" cy="31.5" rx="4.8" ry="3.3" fill="#4f4461"/>
<ellipse cx="50" cy="31.5" rx="4.8" ry="3.3" fill="#4f4461"/>
<path d="M30.5 39.5 Q41.5 38.5 52.5 39.5 Q51 47.5 41.5 47.5 Q32 47.5 30.5 39.5 Z" fill="#8d5a4b"/>
<path d="M33 40.6 Q41.5 39.8 50 40.6 Q49 44 41.5 44 Q34 44 33 40.6 Z" fill="#fff"/>
</svg>
<div class="t" style="left:237px;top:604.18px;font-size:14.2px;line-height:14.2px;color:#fff;font-weight:bold;font-style:normal;font-family:'Liberation Sans',sans-serif;transform:scaleX(0.859);transform-origin:0 0">CUSTOMIZE HOLIDAYS</div>
<div class="t" style="left:292.5px;top:621.98px;font-size:14.2px;line-height:14.2px;color:#fff;font-weight:bold;font-style:normal;font-family:'Liberation Sans',sans-serif;transform:scaleX(0.837);transform-origin:0 0">LIST</div>
<div class="a" style="left:517px;top:310.5px;width:764px;height:75.5px;background:rgba(0,0,0,0.36);filter:blur(3px)"></div>
<div class="a" style="left:524px;top:309.5px;width:750px;height:77.5px;background:#ffe699;box-shadow:0 0 6px 1px rgba(0,0,0,0.2)"></div>
<div class="t" style="left:527.5px;top:315.70px;font-size:13px;line-height:13px;color:#1f1f1f;font-weight:bold;font-style:italic;font-family:'Liberation Sans',sans-serif;text-decoration:underline;text-underline-offset:2px;letter-spacing:0px">Generate dates</div>
<div class="a" style="left:528.5px;top:346.4px;width:3.8px;height:3.8px;background:#1f1f1f;border-radius:50%"></div>
<div class="t" style="left:545.5px;top:342.00px;font-size:13px;line-height:13px;color:#1f1f1f;font-weight:normal;font-style:italic;font-family:'Liberation Sans',sans-serif;letter-spacing:0.16px">Generate up to 1000 dates.&nbsp; Decide which of the weekdays or custom holidays you want to include.</div>
<div class="a" style="left:528.5px;top:372.4px;width:3.8px;height:3.8px;background:#1f1f1f;border-radius:50%"></div>
<div class="t" style="left:545.5px;top:368.00px;font-size:13px;line-height:13px;color:#1f1f1f;font-weight:normal;font-style:italic;font-family:'Liberation Sans',sans-serif;letter-spacing:0.09px">You can generate a random list of dates or a chosen sequence of days.</div>
<div class="a" style="left:517px;top:441.5px;width:764px;height:76px;background:rgba(0,0,0,0.36);filter:blur(3px)"></div>
<div class="a" style="left:524px;top:440.5px;width:750px;height:78px;background:#ffe699;box-shadow:0 0 6px 1px rgba(0,0,0,0.2)"></div>
<div class="t" style="left:527.5px;top:447.70px;font-size:13px;line-height:13px;color:#1f1f1f;font-weight:bold;font-style:italic;font-family:'Liberation Sans',sans-serif;text-decoration:underline;text-underline-offset:2px;letter-spacing:-0.15px">Dates calculator</div>
<div class="a" style="left:528.5px;top:478.4px;width:3.8px;height:3.8px;background:#1f1f1f;border-radius:50%"></div>
<div class="t" style="left:545.5px;top:474.00px;font-size:13px;line-height:13px;color:#1f1f1f;font-weight:normal;font-style:italic;font-family:'Liberation Sans',sans-serif;letter-spacing:0.118px">Count how many working days is in this year. You can include or exclude Saturdays as well as the holidays list.</div>
<div class="a" style="left:528.5px;top:503.79999999999995px;width:3.8px;height:3.8px;background:#1f1f1f;border-radius:50%"></div>
<div class="t" style="left:545.5px;top:499.40px;font-size:13px;line-height:13px;color:#1f1f1f;font-weight:normal;font-style:italic;font-family:'Liberation Sans',sans-serif;letter-spacing:0.216px">Choose first day of the week and the results will automatically be updated.</div>
<div class="a" style="left:517px;top:573.3px;width:764px;height:94px;background:rgba(0,0,0,0.36);filter:blur(3px)"></div>
<div class="a" style="left:524px;top:572.3px;width:750px;height:96px;background:#ffe699;box-shadow:0 0 6px 1px rgba(0,0,0,0.2)"></div>
<div class="t" style="left:527.5px;top:579.00px;font-size:13px;line-height:13px;color:#1f1f1f;font-weight:bold;font-style:italic;font-family:'Liberation Sans',sans-serif;text-decoration:underline;text-underline-offset:2px;letter-spacing:-0.29px">Customize holidays list</div>
<div class="a" style="left:528.5px;top:609.4px;width:3.8px;height:3.8px;background:#1f1f1f;border-radius:50%"></div>
<div class="t" style="left:545.5px;top:605.00px;font-size:13px;line-height:13px;color:#1f1f1f;font-weight:normal;font-style:italic;font-family:'Liberation Sans',sans-serif;letter-spacing:0.192px">Before you generate a list of dates take a look on the list of a days you want to exclude from your list. You can input up to</div>
<div class="t" style="left:545.5px;top:622.80px;font-size:13px;line-height:13px;color:#1f1f1f;font-weight:normal;font-style:italic;font-family:'Liberation Sans',sans-serif;letter-spacing:0.26px">100 different dates.</div>
<div class="a" style="left:528.5px;top:653.1999999999999px;width:3.8px;height:3.8px;background:#1f1f1f;border-radius:50%"></div>
<div class="t" style="left:545.5px;top:648.80px;font-size:13px;line-height:13px;color:#1f1f1f;font-weight:normal;font-style:italic;font-family:'Liberation Sans',sans-serif;letter-spacing:0.2px">Remember to add the holidays date for each year you want to exclude them.</div>
</body></html>
